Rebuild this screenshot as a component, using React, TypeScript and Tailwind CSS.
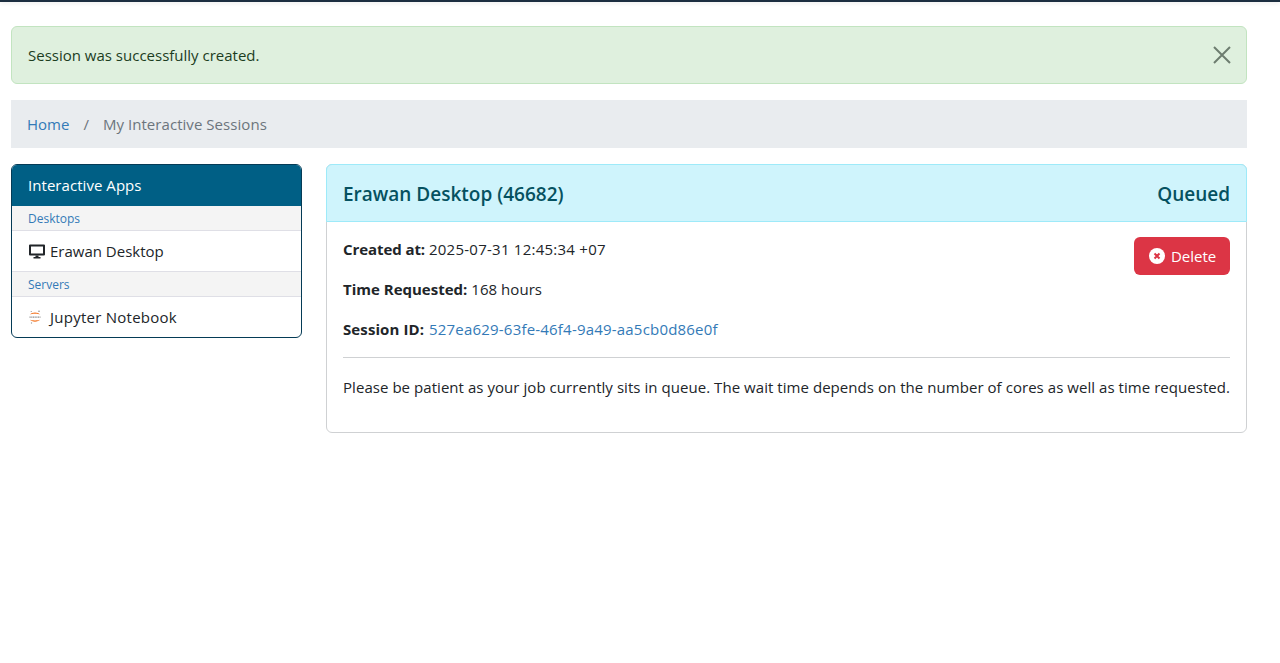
import React from "react";

const font = { fontFamily: '"Open Sans", sans-serif' };

function Jupyter() {
  return (
    <svg width="12" height="14" viewBox="0 0 12 14" className="shrink-0 ml-px">
      <path d="M1 4.6C2.4 1.8 9.6 1.8 11 4.6C9.4 3.4 2.6 3.4 1 4.6Z" fill="#f37726" />
      <path d="M1 9.6C2.4 12.4 9.6 12.4 11 9.6C9.4 10.8 2.6 10.8 1 9.6Z" fill="#f37726" />
      <path d="M0.5 7.1h11" stroke="#8f8f8f" strokeWidth="1.3" strokeDasharray="1.2 0.5" />
      <circle cx="10" cy="1.2" r="0.7" fill="#767677" />
      <circle cx="2.2" cy="1.6" r="0.5" fill="#767677" />
      <circle cx="2.5" cy="13" r="0.7" fill="#9e9e9e" />
    </svg>
  );
}

export default function App() {
  return (
    <div className="min-h-[663px] bg-white text-[#212529] text-[15px] leading-6" style={font}>
      <div className="h-[2px] bg-[#1c2e40] shadow-[0_1px_4px_rgba(0,0,0,0.12)]" />
      <div className="pl-[11px] pr-[33px] pt-6 flex flex-col gap-4">
        <div className="h-[58px] flex items-center justify-between pl-4 pr-[15px] bg-[#dff0de] border border-[#c2e4c0] rounded-md text-[#1c3d1e]">
          <span>Session was successfully created.</span>
          <svg width="18" height="18" viewBox="0 0 18 18">
            <path d="M1 1L17 17M17 1L1 17" stroke="#6d7d6f" strokeWidth="2" />
          </svg>
        </div>

        <div className="h-12 flex items-center px-4 bg-[#e9ecef] text-[#6c757d]">
          <a className="text-[#337ab7]">Home</a>
          <span className="px-[14px]">/</span>
          <span className="tracking-[0.05px]">My Interactive Sessions</span>
        </div>

        <div className="flex items-start gap-6">
          <div className="w-[291px] shrink-0 border border-[#053b56] rounded-md overflow-hidden">
            <div className="h-[41px] flex items-center px-4 pb-[2px] bg-[#005f85] text-white tracking-[0.05px]">Interactive Apps</div>
            <div className="h-[25px] flex items-center px-4 pt-[2px] bg-[#f4f4f4] border-b border-[#dfdfe6] text-xs text-[#337ab7]">Desktops</div>
            <div className="h-[41px] flex items-center gap-[5px] px-4 border-b border-[#dfdfe6]">
              <svg width="16" height="15" viewBox="0 0 16 15" className="shrink-0 ml-px">
                <path fillRule="evenodd" d="M1 0.5h14a1 1 0 0 1 1 1v9a1 1 0 0 1-1 1H1a1 1 0 0 1-1-1v-9a1 1 0 0 1 1-1zM2 2.500v7h12v-7z" fill="#212529" />
                <path d="M6.500 11.500h3v1.500h2V14.500H4.500v-1.500h2z" fill="#212529" />
              </svg>
              <span>Erawan Desktop</span>
            </div>
            <div className="h-[25px] flex items-center px-4 pt-[2px] bg-[#f4f4f4] border-b border-[#dfdfe6] text-xs text-[#337ab7]">Servers</div>
            <div className="h-10 flex items-center gap-[9px] px-4">
              <Jupyter />
              <span className="tracking-[0.25px]">Jupyter Notebook</span>
            </div>
          </div>

          <div className="flex-1 border border-[#cfd1d3] rounded-md h-[269px]">
            <div className="h-[58px] -mx-px -mt-px flex items-center justify-between px-4 pt-[2px] bg-[#cff4fc] border border-[#9eeaf9] rounded-t-md text-[#055160] text-[19px] font-semibold">
              <span>Erawan Desktop (46682)</span>
              <span>Queued</span>
            </div>
            <div className="px-4 pt-[15px]">
              <div className="flex justify-between items-start">
                <div className="flex flex-col gap-4">
                  <div><b className="font-bold tracking-[-0.08px]">Created at:</b> <span className="tracking-[0.25px]">2025-07-31 12:45:34 +07</span></div>
                  <div><b className="font-bold">Time Requested:</b> <span className="tracking-[0.05px]">168 hours</span></div>
                  <div><b className="font-bold tracking-[0.1px]">Session ID:</b> <a className="ml-px text-[#337ab7] tracking-[0.2px]">527ea629-63fe-46f4-9a49-aa5cb0d86e0f</a></div>
                </div>
                <button className="h-[38px] w-24 pl-px flex items-center justify-center gap-[6px] bg-[#dc3545] text-white rounded-md">
                  <svg width="16" height="16" viewBox="0 0 16 16">
                    <circle cx="8" cy="8" r="8" fill="#fff" />
                    <path d="M5.500 5.500l5 5M10.500 5.500l-5 5" stroke="#dc3545" strokeWidth="2" />
                  </svg>
                  Delete
                </button>
              </div>
              <hr className="mt-4 border-t border-[#cfd1d3]" />
              <p className="mt-[17px] whitespace-nowrap tracking-[0.05px]">Please be patient as your job currently sits in queue. The wait time depends on the number of cores as well as time requested.</p>
            </div>
          </div>
        </div>
      </div>
    </div>
  );
}
